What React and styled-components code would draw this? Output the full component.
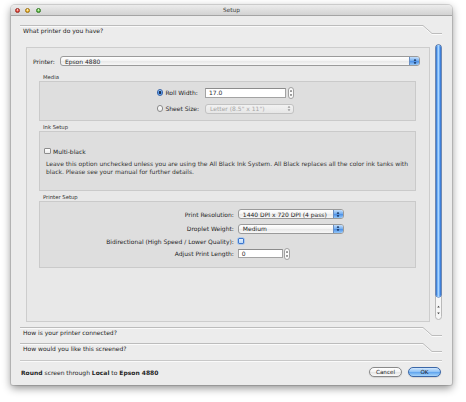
import React from 'react';
import styled, { createGlobalStyle } from 'styled-components';

const GlobalStyle = createGlobalStyle`
  html, body { margin: 0; padding: 0; background: #ffffff; }
  body {
    font-family: "DejaVu Sans", "Liberation Sans", sans-serif;
    font-size: 6px;
    line-height: 7px;
    color: #1f1f1f;
  }
  #root { width: 466px; height: 402px; overflow: hidden; }
`;

const Window = styled.div`
  box-sizing: border-box;
  width: 441px;
  height: 380px;
  margin: 5px 0 0 11px;
  background: #ececec;
  border-radius: 4px 4px 2px 2px;
  box-shadow: 0 3px 9px rgba(0, 0, 0, 0.45), 0 0 0 1px rgba(0, 0, 0, 0.12);
  display: flex;
  flex-direction: column;
  overflow: hidden;
`;

const TitleBar = styled.div`
  box-sizing: border-box;
  height: 11px;
  display: grid;
  grid-template-columns: 1fr auto 1fr;
  align-items: center;
  background: linear-gradient(#ececec, #d2d2d2);
  border-bottom: 1px solid #a4a4a4;
`;

const Lights = styled.div`
  display: flex;
  gap: 5.5px;
  padding-left: 3.5px;
`;

const Light = styled.span`
  width: 5px;
  height: 5px;
  border-radius: 50%;
  box-sizing: border-box;
  border: 0.5px solid ${(p) => p.$edge};
  background: radial-gradient(circle at 50% 30%, #ffffff 0, ${(p) => p.$tint} 45%, ${(p) => p.$base} 100%);
`;

const Title = styled.div`
  color: #3a3a3a;
  font-size: 5.8px;
`;

const Body = styled.div`
  flex: 1;
  display: flex;
  flex-direction: column;
  padding: 0 10px 0 9px;
`;

const StepHeader = styled.div`
  display: flex;
  align-items: flex-start;
  height: ${(p) => p.$h}px;
  margin-top: ${(p) => p.$top}px;
  flex-shrink: 0;
`;

const StepLabel = styled.div`
  flex: 1;
  border-top: 1px solid #bcbcbc;
  box-shadow: inset 0 1px 0 #fafafa;
  padding: 1px 0 0 3px;
  color: #1c1c1c;
`;

const NotchLine = styled.svg`
  display: block;
  width: 19px;
  height: 10px;
  overflow: visible;
  flex-shrink: 0;
`;

const Notch = () => (
  <NotchLine viewBox="0 0 19 10">
    <path d="M0 1.5 L9 9.5 L19 9.5" fill="none" stroke="#fafafa" strokeWidth="1" />
    <path d="M0 0.5 L9 8.5 L19 8.5" fill="none" stroke="#bcbcbc" strokeWidth="1" />
  </NotchLine>
);

const Panel = styled.div`
  display: flex;
  align-items: flex-start;
  flex-shrink: 0;
`;

const ContentBox = styled.div`
  box-sizing: border-box;
  width: 404px;
  height: 275px;
  margin: 3px 0 0 6px;
  background: #e8e8e8;
  border: 1px solid #cdcdcd;
  padding: 8px 9px 0 6px;
  display: flex;
  flex-direction: column;
`;

const Scroller = styled.div`
  box-sizing: border-box;
  width: 7px;
  height: 276px;
  margin-left: 5px;
  border: 1px solid #b9b9b9;
  border-radius: 4px;
  background: #f6f6f6;
  display: flex;
  flex-direction: column;
  align-items: center;
`;

const Thumb = styled.div`
  width: 5px;
  height: 252px;
  border-radius: 3px;
  background: linear-gradient(90deg, #2566c8 0%, #79b5f5 30%, #a9d4ff 50%, #5b9ff0 75%, #2a6acc 100%);
  box-shadow: 0 0 0 0.5px #2459a8;
`;

const ScrollArrows = styled.svg`
  display: block;
  width: 5px;
  height: 16px;
  margin-top: 5px;
`;

const PrinterRow = styled.div`
  display: flex;
  align-items: center;
  height: 10px;
  gap: 5px;
`;

const Label = styled.span`
  white-space: nowrap;
  color: #1f1f1f;
`;

const GroupTitle = styled.div`
  height: 8px;
  line-height: 8px;
  margin-top: ${(p) => p.$top}px;
  padding-left: 4px;
  font-size: 5.3px;
  color: #303030;
  margin-left: 6px;
`;

const GroupBox = styled.div`
  box-sizing: border-box;
  height: ${(p) => p.$h}px;
  margin: 0 4px 0 6px;
  background: #dedede;
  border: 1px solid #cacaca;
  padding: ${(p) => p.$pad};
`;

const MediaGrid = styled.div`
  display: grid;
  grid-template-columns: auto auto;
  justify-content: center;
  align-items: center;
  column-gap: 6px;
  row-gap: 5px;
  grid-auto-rows: 11px;
`;

const Choice = styled.label`
  display: flex;
  align-items: center;
  gap: 2px;
  white-space: nowrap;
`;

const Radio = styled.span`
  box-sizing: border-box;
  width: 6.5px;
  height: 6.5px;
  border-radius: 50%;
  border: 0.6px solid ${(p) => (p.$on ? '#3a64a8' : '#8a8a8a')};
  background: ${(p) =>
    p.$on
      ? 'radial-gradient(circle, #1b2d4e 0 1.1px, transparent 1.3px), linear-gradient(#a8d0fb, #4e92e6 55%, #78b4f4)'
      : 'linear-gradient(#ffffff, #e9e9e9)'};
`;

const Field = styled.div`
  display: flex;
  align-items: center;
  gap: ${(p) => p.$gap ?? 2}px;
`;

const TextInput = styled.div`
  box-sizing: border-box;
  width: ${(p) => p.$w}px;
  height: ${(p) => p.$h ?? 10}px;
  background: #ffffff;
  border: 1px solid #a3a3a3;
  border-top-color: #8c8c8c;
  padding-left: 3px;
  display: flex;
  align-items: center;
`;

const StepperBox = styled.svg`
  display: block;
  width: 6px;
  height: 12px;
`;

const Stepper = ({ dim }) => (
  <StepperBox viewBox="0 0 6 12">
    <rect x="0.5" y="0.5" width="5" height="11" rx="2.5" fill="#fafafa" stroke={dim ? '#bdbdbd' : '#8e8e8e'} strokeWidth="0.8" />
    <path d="M1.8 4.6 L3 3 L4.2 4.6 Z" fill={dim ? '#9c9c9c' : '#333'} />
    <path d="M1.8 7.4 L3 9 L4.2 7.4 Z" fill={dim ? '#9c9c9c' : '#333'} />
  </StepperBox>
);

const PopupBox = styled.div`
  box-sizing: border-box;
  width: ${(p) => p.$w}px;
  height: 10px;
  border: 1px solid ${(p) => (p.$dim ? '#c2c2c2' : '#9a9a9a')};
  border-radius: 3px;
  background: ${(p) =>
    p.$dim ? 'linear-gradient(#f2f2f2, #e6e6e6)' : 'linear-gradient(#ffffff, #f3f3f3 50%, #e8e8e8 52%, #f7f7f7)'};
  display: flex;
  align-items: stretch;
  overflow: hidden;
  flex-shrink: ${(p) => (p.$grow ? 1 : 0)};
  flex-grow: ${(p) => (p.$grow ? 1 : 0)};
`;

const PopupText = styled.span`
  flex: 1;
  padding-left: 4px;
  display: flex;
  align-items: center;
  white-space: nowrap;
  color: ${(p) => (p.$dim ? '#a6a6a6' : '#1f1f1f')};
`;

const PopupCap = styled.span`
  width: 9px;
  display: flex;
  align-items: center;
  justify-content: center;
  background: ${(p) =>
    p.$dim ? 'transparent' : 'linear-gradient(#c4defa, #72adf0 48%, #4b8fe6 52%, #94c7f8)'};
  border-left: ${(p) => (p.$dim ? 'none' : '0.6px solid #6a8fc2')};
`;

const CapArrows = styled.svg`
  display: block;
  width: 4px;
  height: 7px;
`;

const Popup = ({ w, grow, dim, children }) => (
  <PopupBox $w={w} $grow={grow} $dim={dim}>
    <PopupText $dim={dim}>{children}</PopupText>
    <PopupCap $dim={dim}>
      <CapArrows viewBox="0 0 4 7">
        <path d="M0.6 2.8 L2 0.8 L3.4 2.8 Z" fill={dim ? '#999' : '#102a55'} />
        <path d="M0.6 4.2 L2 6.2 L3.4 4.2 Z" fill={dim ? '#999' : '#102a55'} />
      </CapArrows>
    </PopupCap>
  </PopupBox>
);

const Check = styled.span`
  box-sizing: border-box;
  width: 6.5px;
  height: 6.5px;
  border-radius: 1px;
  border: 0.7px solid ${(p) => (p.$focus ? '#3f78cf' : '#8d8d8d')};
  background: ${(p) => (p.$focus ? 'linear-gradient(#e4f0fd, #bcd8f6)' : 'linear-gradient(#ffffff, #ececec)')};
  box-shadow: ${(p) => (p.$focus ? '0 0 0 0.6px #8bb8f0' : 'none')};
`;

const CheckRow = styled.label`
  display: flex;
  align-items: center;
  gap: 2.5px;
  margin-left: -2px;
  height: 8px;
`;

const Note = styled.p`
  margin: 5px 0 0;
  line-height: 8px;
  color: #333;
`;

const SetupGrid = styled.div`
  display: grid;
  grid-template-columns: auto auto;
  grid-template-rows: 10px 10px 6px 10px;
  justify-content: center;
  align-items: center;
  column-gap: 4px;
  row-gap: 4.5px;
`;

const RowLabel = styled.span`
  text-align: right;
  white-space: nowrap;
`;

const Footer = styled.div`
  flex: 1;
  display: flex;
  align-items: center;
  justify-content: space-between;
  border-top: 1px solid #c8c8c8;
  box-shadow: inset 0 1px 0 #fafafa;
  padding: 0 1px 2px 1px;
`;

const Summary = styled.div`
  white-space: nowrap;
  color: #1f1f1f;
  b { font-weight: bold; }
`;

const Buttons = styled.div`
  display: flex;
  gap: 6px;
`;

const Button = styled.button`
  box-sizing: border-box;
  width: 33px;
  height: 10.5px;
  padding: 0;
  border-radius: 6px;
  font: inherit;
  font-size: 5.6px;
  line-height: 8px;
  color: #1a1a1a;
  border: 0.8px solid ${(p) => (p.$primary ? '#3b67a8' : '#8a8a8a')};
  background: ${(p) =>
    p.$primary
      ? 'linear-gradient(#d2e7fd, #8ec2f6 48%, #5ea3ee 52%, #a8d6fb)'
      : 'linear-gradient(#ffffff, #f4f4f4 48%, #e4e4e4 52%, #fbfbfb)'};
  box-shadow: 0 0.5px 1px rgba(0, 0, 0, 0.2);
`;

export default function App() {
  return (
    <>
      <GlobalStyle />
      <Window>
        <TitleBar>
          <Lights>
            <Light $base="#c2281e" $tint="#ee5b50" $edge="#9a2a22" />
            <Light $base="#c98a10" $tint="#f4c446" $edge="#a0730e" />
            <Light $base="#3d9a2c" $tint="#7fd05f" $edge="#2f7a22" />
          </Lights>
          <Title>Setup</Title>
          <span />
        </TitleBar>
        <Body>
          <StepHeader $top={9} $h={19}>
            <StepLabel>What printer do you have?</StepLabel>
            <Notch />
          </StepHeader>
          <Panel>
            <ContentBox>
              <PrinterRow>
                <Label>Printer:</Label>
                <Popup grow>Epson 4880</Popup>
              </PrinterRow>

              <GroupTitle $top={7}>Media</GroupTitle>
              <GroupBox $h={40} $pad="5px 4px 0 0">
                <MediaGrid>
                  <Choice>
                    <Radio $on />
                    Roll Width:
                  </Choice>
                  <Field>
                    <TextInput $w={81}>17.0</TextInput>
                    <Stepper />
                  </Field>
                  <Choice>
                    <Radio />
                    Sheet Size:
                  </Choice>
                  <Popup w={89} dim>
                    Letter (8.5" x 11")
                  </Popup>
                </MediaGrid>
              </GroupBox>

              <GroupTitle $top={2}>Ink Setup</GroupTitle>
              <GroupBox $h={60} $pad="15px 6px 0">
                <CheckRow>
                  <Check />
                  Multi-black
                </CheckRow>
                <Note>
                  Leave this option unchecked unless you are using the All Black Ink System. All Black replaces all
                  the color ink tanks with black. Please see your manual for further details.
                </Note>
              </GroupBox>

              <GroupTitle $top={2}>Printer Setup</GroupTitle>
              <GroupBox $h={67} $pad="7px 5px 0 0">
                <SetupGrid>
                  <RowLabel>Print Resolution:</RowLabel>
                  <Popup w={106}>1440 DPI x 720 DPI (4 pass)</Popup>
                  <RowLabel>Droplet Weight:</RowLabel>
                  <Popup w={106}>Medium</Popup>
                  <RowLabel>Bidirectional (High Speed / Lower Quality):</RowLabel>
                  <Check $focus />
                  <RowLabel>Adjust Print Length:</RowLabel>
                  <Field $gap={1}>
                    <TextInput $w={45} $h={9}>0</TextInput>
                    <Stepper />
                  </Field>
                </SetupGrid>
              </GroupBox>
            </ContentBox>
            <Scroller>
              <Thumb />
              <ScrollArrows viewBox="0 0 5 16">
                <path d="M1.2 5.5 L2.5 3.8 L3.8 5.5 Z" fill="#444" />
                <path d="M1.2 10.5 L2.5 12.2 L3.8 10.5 Z" fill="#444" />
              </ScrollArrows>
            </Scroller>
          </Panel>

          <StepHeader $top={5} $h={16}>
            <StepLabel>How is your printer connected?</StepLabel>
            <Notch />
          </StepHeader>
          <StepHeader $top={0} $h={17}>
            <StepLabel>How would you like this screened?</StepLabel>
            <Notch />
          </StepHeader>

          <Footer>
            <Summary>
              <b>Round</b> screen through <b>Local</b> to <b>Epson 4880</b>
            </Summary>
            <Buttons>
              <Button>Cancel</Button>
              <Button $primary>OK</Button>
            </Buttons>
          </Footer>
        </Body>
      </Window>
    </>
  );
}
